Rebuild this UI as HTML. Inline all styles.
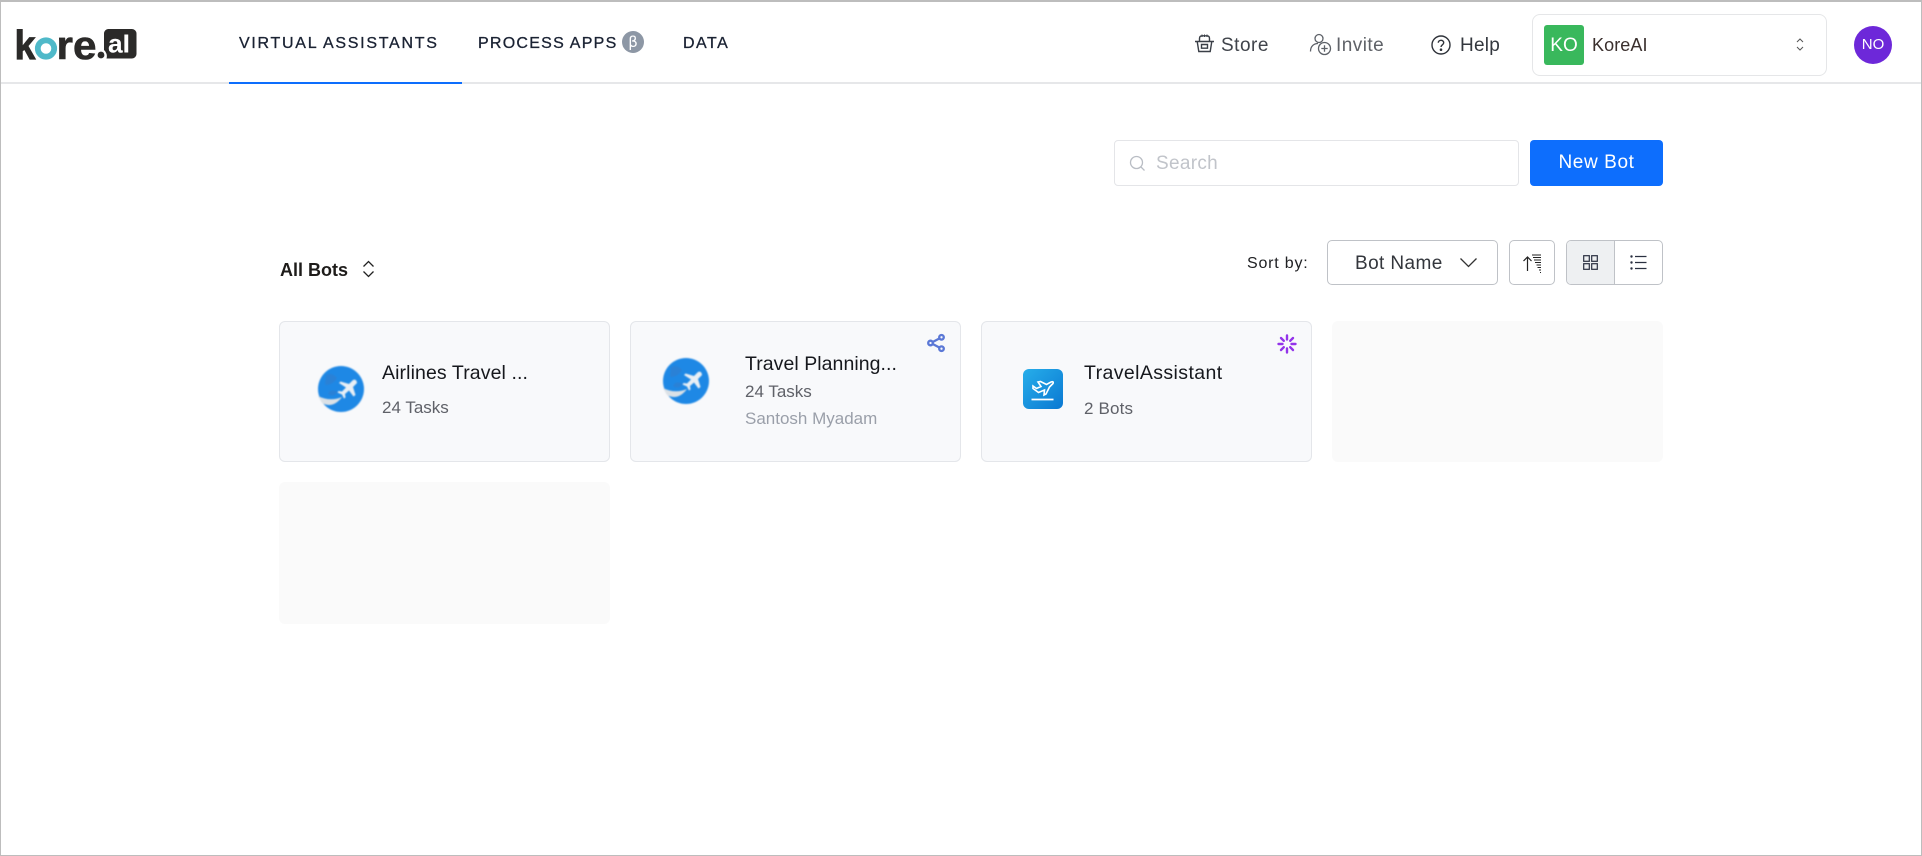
<!DOCTYPE html>
<html><head><meta charset="utf-8"><title>Bots</title>
<style>
html,body{margin:0;padding:0;background:#fff}
body{width:1922px;height:856px;position:relative;overflow:hidden;font-family:"Liberation Sans",sans-serif;color:#202124}
.t{position:absolute;line-height:20px;height:20px;white-space:nowrap}
.a{position:absolute;box-sizing:border-box}
svg{position:absolute;overflow:visible}
.nav{font-size:16px;color:#1a2233;-webkit-text-stroke:.3px #1a2233}
.card{background:#f8f9fb;border:1px solid #e4e6ea;border-radius:6px}
.ghost{background:#fafafa;border-radius:6px}
.title{font-size:19.5px;color:#16181d}
.sub{font-size:17px;color:#5f6168}
</style></head><body>
<div class="a" style="left:0;top:0;width:1922px;height:856px;border:1px solid #bdbdbd;border-top-width:2px;z-index:5;pointer-events:none"></div>
<div class="a" style="left:0;top:0;width:1922px;height:84px;background:#fff;border-bottom:2px solid #e6e7e9"></div>

<svg style="left:0;top:0" width="150" height="80" viewBox="0 0 150 80">
<text x="14.500" y="59" font-family="Liberation Sans" font-weight="700" font-size="41" fill="#2b2a29" stroke="#2b2a29" stroke-width=".9" textLength="21" lengthAdjust="spacingAndGlyphs">k</text>
<circle cx="46" cy="48.500" r="8.200" fill="none" stroke="#4fb9c9" stroke-width="5.800"/>
<text x="56.500" y="59" font-family="Liberation Sans" font-weight="700" font-size="40" fill="#2b2a29" stroke="#2b2a29" stroke-width=".6" textLength="40" lengthAdjust="spacingAndGlyphs">re</text>
<circle cx="101" cy="55" r="3.400" fill="#2b2a29"/>
<path d="M108 29H132a4.500 4.500 0 0 1 4.500 4.500V54a4.500 4.500 0 0 1-4.500 4.500H106.500A8 8 0 0 0 104 50V33.500A4.500 4.500 0 0 1 108 29Z" fill="#2b2a29"/>
<text x="108" y="52.500" font-family="Liberation Sans" font-weight="700" font-size="26" fill="#fff" textLength="22" lengthAdjust="spacingAndGlyphs">aI</text>
</svg>

<div class="t nav" style="left:239px;top:34px;letter-spacing:1.72px">VIRTUAL ASSISTANTS</div>
<div class="a" style="left:229px;top:82px;width:233px;height:2px;background:#0d6efd"></div>
<div class="t nav" style="left:478px;top:34px;letter-spacing:1.25px">PROCESS APPS</div>
<div class="a" style="left:622px;top:31px;width:22px;height:22px;border-radius:50%;background:#8d97a5;color:#fff;font-size:15px;line-height:22px;text-align:center;font-family:'DejaVu Sans',sans-serif">β</div>
<div class="t nav" style="left:683px;top:34px;letter-spacing:1.5px">DATA</div>

<svg style="left:1194px;top:33px" width="21" height="22" viewBox="0 0 21 22" fill="none" stroke="#3a3f47" stroke-width="1.400">
<path d="M2 8.500H19M3.200 8.500 4.800 18.500H16.200L17.800 8.500M1 8.500H20M5.500 8V5.500Q5.500 2.800 8 2.800H13Q15.500 2.800 15.500 5.500V8"/><path d="M7.500 11.500H13.500V15.200H7.500Z"/><path d="M8 1.500V4M10.500 1.500V4M13 1.500V4" stroke-width="1"/>
</svg>
<div class="t" style="left:1221px;top:36px;font-size:19px;letter-spacing:.5px;color:#40444b">Store</div>

<svg style="left:1309px;top:33px" width="24" height="24" viewBox="0 0 24 24" fill="none" stroke="#5d6168" stroke-width="1.300">
<circle cx="10" cy="5.500" r="4"/><path d="M1.500 18.500C1.500 13 5 10.500 9 10.500"/><circle cx="15.500" cy="15.500" r="6"/><path d="M15.500 12.300V18.700M12.300 15.500H18.700"/>
</svg>
<div class="t" style="left:1336px;top:36px;font-size:19px;letter-spacing:.45px;color:#5f6268">Invite</div>

<svg style="left:1431px;top:35px" width="20" height="20" viewBox="0 0 20 20" fill="none" stroke="#2f333a" stroke-width="1.400">
<circle cx="10" cy="10" r="9"/><path d="M7.300 7.800C7.300 4.500 12.700 4.500 12.700 7.700C12.700 9.800 10 9.800 10 12"/><circle cx="10" cy="14.700" r=".6" fill="#2f333a"/>
</svg>
<div class="t" style="left:1460px;top:36px;font-size:19px;letter-spacing:.25px;color:#33373e">Help</div>

<div class="a" style="left:1532px;top:14px;width:295px;height:62px;border:1px solid #e5e6e8;border-radius:8px"></div>
<div class="a" style="left:1544px;top:25px;width:40px;height:40px;background:#39b85c;border-radius:3px;color:#fff;font-size:19px;line-height:42px;text-align:center">KO</div>
<div class="t" style="left:1592px;top:35px;font-size:18px;letter-spacing:.1px;color:#3a2f2d">KoreAI</div>
<svg style="left:1795px;top:37px" width="10" height="15" viewBox="0 0 10 15" fill="none" stroke="#555" stroke-width="1"><path d="M2 5 5 2 8 5M2 10 5 13 8 10"/></svg>
<div class="a" style="left:1854px;top:26px;width:38px;height:38px;border-radius:50%;background:#6d28d9;color:#fff;font-size:15px;line-height:38px;text-align:center">NO</div>

<div class="a" style="left:1114px;top:140px;width:405px;height:46px;border:1px solid #e4e5e8;border-radius:4px"></div>
<svg style="left:1129px;top:155px" width="17" height="17" viewBox="0 0 17 17" fill="none" stroke="#b9bdc4" stroke-width="1.300"><circle cx="7.500" cy="7.500" r="6"/><path d="M12 12 15.500 15.500"/></svg>
<div class="t" style="left:1156px;top:154px;font-size:19px;letter-spacing:.3px;color:#c1c4ca">Search</div>
<div class="a" style="left:1530px;top:140px;width:133px;height:46px;background:#0d6efd;border-radius:4px;color:#fff;font-size:19px;line-height:46px;text-align:center;letter-spacing:.6px">New Bot</div>

<div class="t" style="left:280px;top:260px;font-size:18px;font-weight:700;color:#1e1c1a">All Bots</div>
<svg style="left:362px;top:260px" width="13" height="18" viewBox="0 0 13 18" fill="none" stroke="#222" stroke-width="1.300"><path d="M1.500 6.500 6.500 1.500 11.500 6.500M1.500 11.500 6.500 16.500 11.500 11.500"/></svg>

<div class="t" style="left:1247px;top:254px;font-size:16px;letter-spacing:.8px;color:#202124">Sort by:</div>
<div class="a" style="left:1327px;top:240px;width:171px;height:45px;border:1px solid #bfc2c7;border-radius:5px"></div>
<div class="t" style="left:1355px;top:254px;font-size:19px;letter-spacing:.4px;color:#33363c">Bot Name</div>
<svg style="left:1459px;top:257px" width="19" height="11" viewBox="0 0 19 11" fill="none" stroke="#333" stroke-width="1.300"><path d="M1.500 1.500 9.500 9.500 17.500 1.500"/></svg>
<div class="a" style="left:1509px;top:240px;width:46px;height:45px;border:1px solid #bfc2c7;border-radius:5px"></div>
<svg style="left:1522px;top:254px" width="22" height="20" viewBox="0 0 22 20" fill="none" stroke="#222" stroke-width="1.200"><path d="M5.500 17V3M1.500 7 5.500 3 9.500 7"/><path d="M10 1H19M11 3.500H19M12 6H19M13 8.500H19M14.500 11H19M15.500 13.500H19M17 16H19M18 18.500H19" stroke-width=".9"/></svg>
<div class="a" style="left:1566px;top:240px;width:97px;height:45px;border:1px solid #bfc2c7;border-radius:5px;overflow:hidden"><div style="width:47px;height:43px;background:#eef0f2;border-right:1px solid #bfc2c7"></div></div>
<svg style="left:1583px;top:255px" width="15" height="15" viewBox="0 0 15 15" fill="none" stroke="#2a3040" stroke-width="1.200"><rect x=".7" y=".7" width="5.600" height="5.600"/><rect x="8.700" y=".7" width="5.600" height="5.600"/><rect x=".7" y="8.700" width="5.600" height="5.600"/><rect x="8.700" y="8.700" width="5.600" height="5.600"/></svg>
<svg style="left:1630px;top:255px" width="17" height="15" viewBox="0 0 17 15" fill="none" stroke="#2a3040" stroke-width="1.200"><path d="M5 1.500H16.500M5 7.500H16.500M5 13.500H16.500"/><g fill="#2a3040" stroke="none"><circle cx="1.500" cy="1.500" r="1.200"/><circle cx="1.500" cy="7.500" r="1.200"/><circle cx="1.500" cy="13.500" r="1.200"/></g></svg>

<div class="a card" style="left:279px;top:321px;width:331px;height:141px"></div>
<div class="a card" style="left:630px;top:321px;width:331px;height:141px"></div>
<div class="a card" style="left:981px;top:321px;width:331px;height:141px"></div>
<div class="a ghost" style="left:1332px;top:321px;width:331px;height:141px"></div>
<div class="a ghost" style="left:279px;top:482px;width:331px;height:142px"></div>

<svg style="left:318px;top:366px;filter:blur(.8px)" width="46" height="46" viewBox="0 0 46 46">
<circle cx="23" cy="23" r="23" fill="#1e88e5"/>
<path d="M8 9Q14 6 19 12Q15 19 7 19ZM20 26Q15 32 10 28Q12 22 20 26Z" fill="#2f7fd0" opacity=".7"/>
<path d="M39 17 35 21 37.500 29 35.500 30.500 31 24.500 27 28 27.500 31.500 26 32.500 24 28.500 19.500 26.500 20.500 25 24 25.500 28 21.500 21 17 22.500 15.500 31 18 35 14Q38.500 12.500 39 17Z" fill="#e9eff5"/>
<path d="M0 30Q12 36 24 31Q15 43 4 37Z" fill="#dbe1e6"/>
</svg>
<div class="t title" style="left:382px;top:363px;letter-spacing:.1px">Airlines Travel ...</div>
<div class="t sub" style="left:382px;top:398px">24 Tasks</div>

<svg style="left:663px;top:358px;filter:blur(.8px)" width="46" height="46" viewBox="0 0 46 46">
<circle cx="23" cy="23" r="23" fill="#1e88e5"/>
<path d="M8 9Q14 6 19 12Q15 19 7 19ZM20 26Q15 32 10 28Q12 22 20 26Z" fill="#2f7fd0" opacity=".7"/>
<path d="M39 17 35 21 37.500 29 35.500 30.500 31 24.500 27 28 27.500 31.500 26 32.500 24 28.500 19.500 26.500 20.500 25 24 25.500 28 21.500 21 17 22.500 15.500 31 18 35 14Q38.500 12.500 39 17Z" fill="#e9eff5"/>
<path d="M0 30Q12 36 24 31Q15 43 4 37Z" fill="#dbe1e6"/>
</svg>
<div class="t title" style="left:745px;top:354px;letter-spacing:.05px">Travel Planning...</div>
<div class="t sub" style="left:745px;top:382px">24 Tasks</div>
<div class="t sub" style="left:745px;top:409px;color:#9a9fa9">Santosh Myadam</div>
<svg style="left:927px;top:334px" width="18" height="18" viewBox="0 0 18 18" fill="none" stroke="#5b78d6" stroke-width="2.300"><circle cx="3.500" cy="9" r="2.300"/><circle cx="14.500" cy="3.300" r="2.300"/><circle cx="14.500" cy="14.700" r="2.300"/><path d="M5.700 8 12.300 4.500M5.700 10 12.300 13.500"/></svg>

<svg style="left:1023px;top:369px" width="40" height="40" viewBox="0 0 40 40">
<defs><linearGradient id="g" x1="0" y1="0" x2="1" y2="1"><stop offset="0" stop-color="#27aeea"/><stop offset="1" stop-color="#0a78d2"/></linearGradient></defs>
<rect width="40" height="40" rx="6" fill="url(#g)"/>
<path d="M10 17 13.500 19.500 18 17.500 15 13 17.500 12.500 23.500 15.500 28 13Q31 12 30 14.500L26.500 18 23 25 21 26 21.500 21 15.500 23.500 10 19.500Z" fill="none" stroke="#fff" stroke-width="1.600"/>
<path d="M8.500 30.500H30.500" stroke="#fff" stroke-width="1.700"/>
</svg>
<div class="t title" style="left:1084px;top:363px;letter-spacing:.4px">TravelAssistant</div>
<div class="t sub" style="left:1084px;top:399px;letter-spacing:.15px">2 Bots</div>
<svg style="left:1277px;top:334px" width="20" height="20" viewBox="0 0 20 20" fill="none" stroke="#9333ea" stroke-width="2.400" stroke-linecap="round"><path d="M10 1.500V5.500M10 14.500V18.500M1.500 10H5.500M14.500 10H18.500M4 4 6.800 6.800M13.200 13.200 16 16M16 4 13.200 6.800M6.800 13.200 4 16"/></svg>
</body></html>
